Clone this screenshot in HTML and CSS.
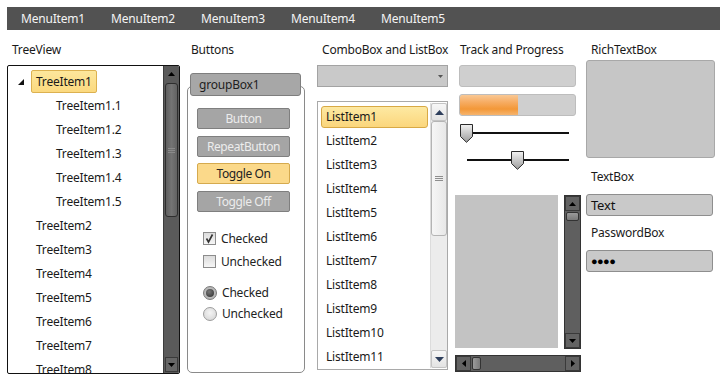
FILE: index.html
```html
<!DOCTYPE html>
<html>
<head>
<meta charset="utf-8">
<link rel="stylesheet" href="styles.css">
</head>
<body>
<div class="menubar">
  <span class="menuitem">MenuItem1</span>
  <span class="menuitem">MenuItem2</span>
  <span class="menuitem">MenuItem3</span>
  <span class="menuitem">MenuItem4</span>
  <span class="menuitem">MenuItem5</span>
</div>
<div class="main">
  <section class="col col-tree">
    <div class="label">TreeView</div>
    <div class="tree">
      <div class="tree-items">
        <div class="trow"><svg class="exp" width="6" height="6" viewBox="0 0 6 6"><polygon points="6,0 6,6 0,6" fill="#111"/></svg><span class="titem sel">TreeItem1</span></div>
        <div class="trow child"><span class="titem">TreeItem1.1</span></div>
        <div class="trow child"><span class="titem">TreeItem1.2</span></div>
        <div class="trow child"><span class="titem">TreeItem1.3</span></div>
        <div class="trow child"><span class="titem">TreeItem1.4</span></div>
        <div class="trow child"><span class="titem">TreeItem1.5</span></div>
        <div class="trow top"><span class="titem">TreeItem2</span></div>
        <div class="trow top"><span class="titem">TreeItem3</span></div>
        <div class="trow top"><span class="titem">TreeItem4</span></div>
        <div class="trow top"><span class="titem">TreeItem5</span></div>
        <div class="trow top"><span class="titem">TreeItem6</span></div>
        <div class="trow top"><span class="titem">TreeItem7</span></div>
        <div class="trow top"><span class="titem">TreeItem8</span></div>
      </div>
      <div class="tscroll">
        <div class="tbtn"><svg width="7" height="4" viewBox="0 0 7 4"><polygon points="3.5,0 7,4 0,4" fill="#000"/></svg></div>
        <div class="ttrack">
          <div class="tthumb"><span class="grip"></span></div>
        </div>
        <div class="tbtn down"><svg width="7" height="4" viewBox="0 0 7 4"><polygon points="0,0 7,0 3.5,4" fill="#000"/></svg></div>
      </div>
    </div>
  </section>

  <section class="col col-buttons">
    <div class="label">Buttons</div>
    <div class="frame">
      <div class="gheader">groupBox1</div>
      <div class="btn first">Button</div>
      <div class="btn gap6">RepeatButton</div>
      <div class="btn on">Toggle On</div>
      <div class="btn gap7">Toggle Off</div>
      <div class="checks">
        <div class="crow"><span class="cbox"><svg width="11" height="11" viewBox="0 0 11 11"><path d="M2.5 5.5 L4.5 9 L8.5 1.5" fill="none" stroke="#333" stroke-width="1.6"/></svg></span>Checked</div>
        <div class="crow"><span class="cbox"></span>Unchecked</div>
      </div>
      <div class="radios">
        <div class="rrow"><span class="rad checked"><span class="dot"></span></span>Checked</div>
        <div class="rrow"><span class="rad"></span>Unchecked</div>
      </div>
    </div>
  </section>

  <section class="col col-list">
    <div class="label">ComboBox and ListBox</div>
    <div class="combo"><svg width="5" height="3" viewBox="0 0 5 3"><polygon points="0,0 5,0 2.5,3" fill="#555"/></svg></div>
    <div class="listbox">
      <div class="litems">
        <div class="litem sel">ListItem1</div>
        <div class="litem">ListItem2</div>
        <div class="litem">ListItem3</div>
        <div class="litem">ListItem4</div>
        <div class="litem">ListItem5</div>
        <div class="litem">ListItem6</div>
        <div class="litem">ListItem7</div>
        <div class="litem">ListItem8</div>
        <div class="litem">ListItem9</div>
        <div class="litem">ListItem10</div>
        <div class="litem">ListItem11</div>
      </div>
      <div class="lscroll">
        <div class="lbtn"><svg width="9" height="5" viewBox="0 0 9 5"><polygon points="4.5,0 9,5 0,5" fill="#2e3f5c"/></svg></div>
        <div class="ltrack"><div class="lthumb"><span class="lgrip"></span></div></div>
        <div class="lbtn"><svg width="9" height="5" viewBox="0 0 9 5"><polygon points="0,0 9,0 4.5,5" fill="#2e3f5c"/></svg></div>
      </div>
    </div>
  </section>

  <section class="col col-track">
    <div class="label">Track and Progress</div>
    <div class="progress"></div>
    <div class="progress p2"><div class="fill" style="width:58px"></div></div>
    <div class="slider s1">
      <span class="sline"></span>
      <svg class="sthumb" width="13" height="19" viewBox="0 0 13 19"><defs><linearGradient id="tg" x1="0" y1="0" x2="0" y2="1"><stop offset="0" stop-color="#f2f2f2"/><stop offset="1" stop-color="#9c9c9c"/></linearGradient></defs><polygon points="0.5,0.5 12.5,0.5 12.5,12.5 6.5,18.3 0.5,12.5" fill="url(#tg)" stroke="#2a2a2a"/></svg>
    </div>
    <div class="slider s2">
      <span class="sline"></span>
      <svg class="sthumb" width="13" height="19" viewBox="0 0 13 19"><polygon points="0.5,0.5 12.5,0.5 12.5,12.5 6.5,18.3 0.5,12.5" fill="url(#tg)" stroke="#2a2a2a"/></svg>
    </div>
    <div class="viewer">
      <div class="vcontent"></div>
      <div class="dscroll">
        <div class="dbtn"><svg width="7" height="4" viewBox="0 0 7 4"><polygon points="3.5,0 7,4 0,4" fill="#000"/></svg></div>
        <div class="dtrack"><div class="dthumb"></div></div>
        <div class="dbtn"><svg width="7" height="4" viewBox="0 0 7 4"><polygon points="0,0 7,0 3.5,4" fill="#000"/></svg></div>
      </div>
    </div>
    <div class="hscroll">
      <div class="dbtn"><svg width="4" height="7" viewBox="0 0 4 7"><polygon points="0,3.5 4,0 4,7" fill="#000"/></svg></div>
      <div class="htrack"><div class="hthumb"></div></div>
      <div class="dbtn"><svg width="4" height="7" viewBox="0 0 4 7"><polygon points="0,0 4,3.5 0,7" fill="#000"/></svg></div>
    </div>
  </section>

  <section class="col col-text">
    <div class="label">RichTextBox</div>
    <div class="rich"></div>
    <div class="label l2">TextBox</div>
    <div class="textbox">Text</div>
    <div class="label l3">PasswordBox</div>
    <div class="textbox pw">●●●●</div>
  </section>
</div>
</body>
</html>
```

FILE: styles.css
```css
* { box-sizing: border-box; }
body {
  margin: 0;
  padding: 7px 0 0 7px;
  font-family: "Noto Sans", "Open Sans", sans-serif;
  font-size: 12px;
  letter-spacing: -0.2px;
  color: #1a1a1a;
  background: #fff;
}
.menubar {
  display: flex;
  align-items: center;
  width: 713px;
  height: 23px;
  padding-left: 14px;
  background: #525252;
}
.menuitem { width: 90px; color: #f4f4f4; white-space: nowrap; }
.main { display: flex; align-items: flex-start; }
.col { display: flex; flex-direction: column; }
.label {
  margin-top: 12px;
  height: 16px;
  line-height: 16px;
  padding-left: 5px;
  white-space: nowrap;
}
.col-tree { width: 173px; }
.col-buttons { width: 118px; margin-left: 7px; }
.col-buttons .label { padding-left: 4px; }
.col-list { width: 131px; margin-left: 12px; }
.col-track { width: 126px; margin-left: 7px; }
.col-text { width: 129px; margin-left: 5px; }

/* Tree */
.tree {
  margin-top: 7px;
  height: 309px;
  border: 1px solid #111;
  border-radius: 2px;
  display: flex;
  overflow: hidden;
}
.tree-items { flex: 1; padding-top: 4px; overflow: hidden; }
.trow { height: 24px; display: flex; align-items: flex-start; white-space: nowrap; }
.trow .exp { margin: 9px 7px 0 10px; flex: none; }
.trow.top { padding-left: 23px; }
.trow.child { padding-left: 43px; }
.titem {
  height: 23px;
  line-height: 21px;
  padding: 0 4px;
  border: 1px solid transparent;
  border-radius: 2px;
}
.titem.sel { background: linear-gradient(#fde79c, #fbd97f); border-color: #dcb150; }
.tscroll {
  width: 16px;
  background: #5a5a5a;
  border-left: 1px solid #3c3c3c;
  display: flex;
  flex-direction: column;
}
.tbtn { height: 16px; display: flex; align-items: center; justify-content: center; flex: none; }
.tbtn.down { background: #666; border: 1px solid #3a3a3a; margin: 0 1px 1px; height: 15px; }
.ttrack { flex: 1; padding: 1px 1px; }
.tthumb {
  height: 134px;
  border: 1px solid #2e2e2e;
  border-radius: 3px;
  background: linear-gradient(90deg, #5f5f5f, #747474 50%, #626262);
  display: flex;
  align-items: center;
  justify-content: center;
}
.grip { width: 7px; height: 5px; border-top: 1px solid #8a8a8a; border-bottom: 1px solid #8a8a8a; background: linear-gradient(transparent 1px, #8a8a8a 1px, #8a8a8a 2px, transparent 2px); }

/* Buttons */
.frame {
  margin-top: 28px;
  height: 287px;
  border: 1px solid #8a8a8a;
  border-radius: 5px;
  display: flex;
  flex-direction: column;
}
.gheader {
  margin: -14px 3px 0 2px;
  height: 23px;
  line-height: 21px;
  padding-left: 8px;
  background: #a7a7a7;
  border: 1px solid #7e7e7e;
  border-radius: 3px;
  color: #1e1e1e;
}
.btn {
  width: 93px;
  height: 21px;
  margin-left: 9px;
  margin-top: 7px;
  line-height: 19px;
  text-align: center;
  background: #a5a5a5;
  border: 1px solid #7f7f7f;
  border-radius: 2px;
  color: #ececec;
  letter-spacing: -0.4px;
}
.btn.first { margin-top: 12px; }
.btn.gap6 { margin-top: 7px; }
.btn.on { margin-top: 6px; background: #fbd98a; border-color: #d5aa4e; color: #222; }
.btn.gap7 { margin-top: 7px; }
.checks { margin-top: 15px; }
.crow, .rrow { display: flex; align-items: center; padding-left: 15px; color: #222; }
.crow { height: 23px; }
.cbox {
  width: 13px; height: 13px;
  margin-right: 5px;
  border: 1px solid #8c8c8c;
  background: linear-gradient(#dcdcdc, #f6f6f6);
  display: flex; align-items: center; justify-content: center;
}
.radios { margin-top: 9px; }
.rrow { height: 21px; }
.rad {
  width: 14px; height: 14px;
  margin-right: 5px;
  border: 1px solid #9c9c9c;
  border-radius: 50%;
  background: radial-gradient(circle at 50% 40%, #f4f4f4, #d2d2d2);
  display: flex; align-items: center; justify-content: center;
}
.rad.checked { border-color: #7a7a7a; background: radial-gradient(#cfcfcf, #a9a9a9); }
.dot { width: 8px; height: 8px; border-radius: 50%; background: radial-gradient(circle at 40% 35%, #777, #2c2c2c); }

/* List */
.combo {
  margin-top: 7px;
  height: 22px;
  background: #c9c9c9;
  border: 1px solid #a3a3a3;
  display: flex;
  align-items: center;
  justify-content: flex-end;
  padding-right: 4px;
}
.listbox {
  margin-top: 14px;
  height: 269px;
  border: 1px solid #a9a9a9;
  display: flex;
}
.litems { flex: 1; padding: 4px 2px 0 3px; overflow: hidden; }
.litem {
  height: 22px;
  margin-bottom: 2px;
  line-height: 20px;
  padding-left: 4px;
  border: 1px solid transparent;
  border-radius: 3px;
  white-space: nowrap;
}
.litem.sel { background: linear-gradient(#fde9a2, #fbd67c); border-color: #d8a945; }
.lscroll {
  width: 17px;
  margin: 1px 0;
  background: #ececec;
  border-left: 1px solid #dcdcdc;
  display: flex;
  flex-direction: column;
}
.lbtn {
  height: 18px;
  flex: none;
  display: flex; align-items: center; justify-content: center;
  background: linear-gradient(#f7f7f7, #e3e3e3);
  border: 1px solid #c4c4c4;
  border-radius: 2px;
}
.ltrack { flex: 1; }
.lthumb {
  height: 115px;
  border: 1px solid #b4b4b4;
  border-radius: 3px;
  background: linear-gradient(90deg, #f6f6f6, #e8e8e8);
  display: flex; align-items: center; justify-content: center;
}
.lgrip { width: 8px; height: 5px; border-top: 1px solid #8e8e8e; border-bottom: 1px solid #8e8e8e; background: linear-gradient(transparent 1px, #8e8e8e 1px, #8e8e8e 2px, transparent 2px); }

/* Track and progress */
.progress {
  margin: 7px 0 0 4px;
  width: 117px;
  height: 22px;
  background: #cfcfcf;
  border: 1px solid #bdbdbd;
  border-radius: 3px;
  overflow: hidden;
}
.fill {
  height: 100%;
  background: linear-gradient(#f9c894, #f7ad64 35%, #f39838 70%, #f6b46e);
  border-radius: 2px 0 0 2px;
}
.slider { position: relative; height: 19px; }
.slider.s1 { margin-top: 8px; }
.slider.s2 { margin-top: 8px; }
.sline { position: absolute; top: 8px; height: 2px; background: #111; right: 12px; }
.s1 .sline { left: 5px; }
.s2 .sline { left: 12px; }
.sthumb { position: absolute; top: 0; }
.s1 .sthumb { left: 5px; }
.s2 .sthumb { left: 56px; }
.viewer { margin-top: 25px; display: flex; align-items: flex-start; }
.vcontent { width: 103px; height: 153px; background: #c3c3c3; }
.dscroll {
  margin-left: 6px;
  width: 17px;
  height: 154px;
  background: #5f5f5f;
  border: 1px solid #333;
  display: flex;
  flex-direction: column;
}
.dbtn {
  flex: none;
  width: 15px; height: 15px;
  display: flex; align-items: center; justify-content: center;
  background: #636363;
  border: 1px solid #3a3a3a;
}
.dtrack { flex: 1; padding-top: 1px; }
.dthumb { height: 9px; margin: 0 1px; background: linear-gradient(#9a9a9a, #7a7a7a); border: 1px solid #333; border-radius: 2px; }
.hscroll {
  margin-top: 6px;
  width: 126px;
  height: 17px;
  background: #5f5f5f;
  border: 1px solid #333;
  display: flex;
}
.htrack { flex: 1; padding-left: 1px; }
.hthumb { width: 9px; height: 13px; margin-top: 1px; background: linear-gradient(90deg, #9a9a9a, #7a7a7a); border: 1px solid #333; border-radius: 2px; }

/* Text column */
.rich {
  margin-top: 2px;
  height: 98px;
  background: #c6c6c6;
  border: 1px solid #a8a8a8;
  border-radius: 3px;
}
.label.l2 { margin-top: 11px; }
.label.l3 { margin-top: 9px; }
.textbox {
  margin-top: 9px;
  width: 127px;
  height: 22px;
  padding-left: 4px;
  line-height: 20px;
  background: #c9c9c9;
  border: 1px solid #8e8e8e;
  border-radius: 3px;
  font-size: 13px;
  color: #111;
}
.textbox.pw { font-size: 11px; letter-spacing: -0.6px; line-height: 20px; color: #000; }
```
